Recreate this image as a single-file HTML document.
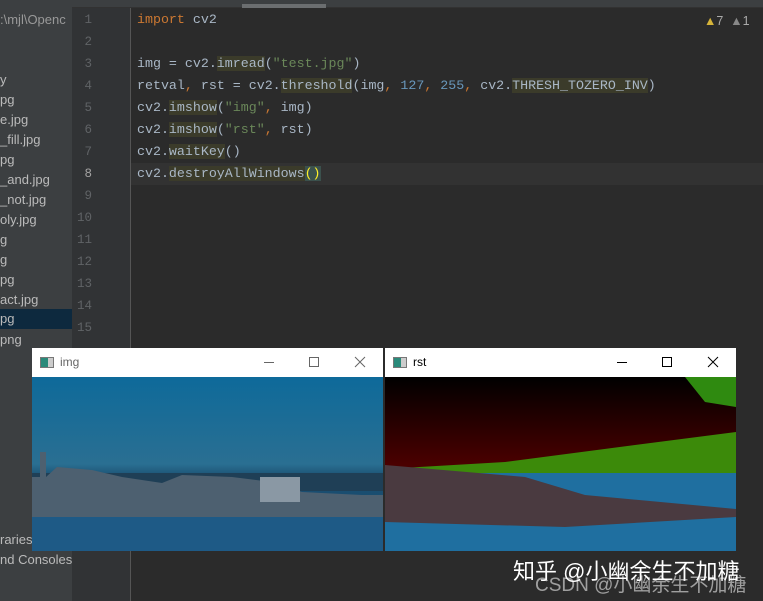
<!DOCTYPE html>
<html><head><meta charset="utf-8"><style>
*{margin:0;padding:0;box-sizing:border-box}
body{width:763px;height:601px;overflow:hidden;background:#2b2b2b;position:relative;font-family:"Liberation Sans","Noto Sans CJK SC",sans-serif}
.abs{position:absolute}
#side{left:0;top:0;width:72px;height:601px;background:#3c3f41;color:#bbbbbb;font-size:13px}
#side div{position:absolute;left:0;white-space:nowrap;height:20px;line-height:20px}
#gut{left:72px;top:8px;width:59px;height:593px;background:#313335;border-right:1px solid #555}
.ln{position:absolute;left:72px;width:20px;text-align:right;color:#606366;font:12.5px "Liberation Mono",monospace}
.code{position:absolute;left:137px;font:13.3px "Liberation Mono",monospace;color:#a9b7c6;white-space:pre;height:22px;line-height:22px}
.k{color:#cc7832}.s{color:#6a8759}.n{color:#6897bb}.h{background:#3b3b2a}.y{color:#ffef28;background:#3b514d}
#tabs{left:72px;top:0;width:691px;height:8px;background:#3c3f41;border-bottom:1px solid #323232}
.win{position:absolute;top:348px;width:351px;height:203px;background:#fff}
.tb{height:29px;font-size:12px;color:#000;position:relative}
.ic{position:absolute;left:8px;top:9px;width:14px;height:11px;border:1px solid #777;background:linear-gradient(90deg,#2a8a7a 60%,#ccc 60%)}
.t{position:absolute;left:28px;top:7px}
.ctl{position:absolute;top:8px}
</style></head><body>
<div id="side" class="abs">
<div style="top:10px;color:#999">:\mjl\Openc</div>
<div style="top:70px">y</div>
<div style="top:90px">pg</div>
<div style="top:110px">e.jpg</div>
<div style="top:130px">_fill.jpg</div>
<div style="top:150px">pg</div>
<div style="top:170px">_and.jpg</div>
<div style="top:190px">_not.jpg</div>
<div style="top:210px">oly.jpg</div>
<div style="top:230px">g</div>
<div style="top:250px">g</div>
<div style="top:270px">pg</div>
<div style="top:290px">act.jpg</div>
<div style="top:309px;width:72px;background:#0d293e">pg</div>
<div style="top:330px">png</div>
<div style="top:530px">raries</div>
<div style="top:550px">nd Consoles</div>
</div>
<div id="tabs" class="abs"><div class="abs" style="left:170px;top:4px;width:84px;height:4px;background:#6b6e70"></div></div>
<div id="gut" class="abs"></div>
<div class="abs" style="left:131px;top:163px;width:632px;height:22px;background:#323232"></div>
<div class="ln" style="top:13px">1</div><div class="ln" style="top:35px">2</div><div class="ln" style="top:57px">3</div><div class="ln" style="top:79px">4</div><div class="ln" style="top:101px">5</div><div class="ln" style="top:123px">6</div><div class="ln" style="top:145px">7</div><div class="ln" style="top:167px;color:#a4a3a3">8</div><div class="ln" style="top:189px">9</div><div class="ln" style="top:211px">10</div><div class="ln" style="top:233px">11</div><div class="ln" style="top:255px">12</div><div class="ln" style="top:277px">13</div><div class="ln" style="top:299px">14</div><div class="ln" style="top:321px">15</div>
<div class="code" style="top:9px"><span class="k">import</span> cv2</div>
<div class="code" style="top:53px">img = cv2.<span class="h">imread</span>(<span class="s">"test.jpg"</span>)</div>
<div class="code" style="top:75px">retval<span class="k">,</span> rst = cv2.<span class="h">threshold</span>(img<span class="k">,</span> <span class="n">127</span><span class="k">,</span> <span class="n">255</span><span class="k">,</span> cv2.<span class="h">THRESH_TOZERO_INV</span>)</div>
<div class="code" style="top:97px">cv2.<span class="h">imshow</span>(<span class="s">"img"</span><span class="k">,</span> img)</div>
<div class="code" style="top:119px">cv2.<span class="h">imshow</span>(<span class="s">"rst"</span><span class="k">,</span> rst)</div>
<div class="code" style="top:141px">cv2.<span class="h">waitKey</span>()</div>
<div class="code" style="top:163px">cv2.<span class="h">destroyAllWindows</span><span class="y">()</span></div>
<div class="abs" style="left:704px;top:14px;font-size:12.5px;color:#aaa"><span style="color:#d6b43a">▲</span>7 &nbsp;<span style="color:#888">▲</span>1</div>

<div class="win" style="left:32px">
<div class="tb"><div class="ic"></div><span class="t" style="color:#666">img</span>
<svg class="ctl" style="left:231px" width="12" height="12"><path d="M1 6.5H11" stroke="#666" stroke-width="1"/></svg>
<svg class="ctl" style="left:276px" width="12" height="12"><rect x="1.5" y="1.5" width="9" height="9" fill="none" stroke="#666"/></svg>
<svg class="ctl" style="left:322px" width="12" height="12"><path d="M1 1L11 11M11 1L1 11" stroke="#666"/></svg></div>
<svg width="351" height="174" style="display:block">
<defs><linearGradient id="sky" x1="0" y1="0" x2="0" y2="1"><stop offset="0" stop-color="#0e6a9a"/><stop offset="0.5" stop-color="#2a6f92"/><stop offset="0.58" stop-color="#1a4d6e"/><stop offset="1" stop-color="#1b4f78"/></linearGradient></defs>
<rect width="351" height="174" fill="url(#sky)"/>
<rect x="0" y="96" width="351" height="18" fill="#1f3f56"/>
<path d="M0 130 L0 100 L8 100 L8 75 L14 75 L14 100 L25 90 L60 93 L90 100 L130 106 L150 98 L200 100 L240 105 L270 115 L330 118 L351 118 L351 140 L0 140Z" fill="#4d6070"/>
<rect x="0" y="140" width="351" height="34" fill="#1e5a86"/>
<rect x="228" y="100" width="40" height="25" fill="#8a98a4"/>
</svg></div>

<div class="win" style="left:385px">
<div class="tb"><div class="ic"></div><span class="t">rst</span>
<svg class="ctl" style="left:231px" width="12" height="12"><path d="M1 6.5H11" stroke="#000"/></svg>
<svg class="ctl" style="left:276px" width="12" height="12"><rect x="1.5" y="1.5" width="9" height="9" fill="none" stroke="#000"/></svg>
<svg class="ctl" style="left:322px" width="12" height="12"><path d="M1 1L11 11M11 1L1 11" stroke="#000"/></svg></div>
<svg width="351" height="174" style="display:block">
<defs><linearGradient id="rs" x1="0" y1="0" x2="0" y2="1"><stop offset="0" stop-color="#000"/><stop offset="0.5" stop-color="#4a0000"/></linearGradient></defs>
<rect width="351" height="174" fill="url(#rs)"/>
<path d="M0 92 L120 85 L250 68 L351 55 L351 98 L0 98Z" fill="#3c8a0a"/>
<path d="M300 0 L351 0 L351 30 L320 25Z" fill="#2f8a10"/>
<rect x="0" y="96" width="351" height="78" fill="#1f6fa0"/>
<path d="M0 88 L0 145 L180 150 L351 140 L351 132 L200 118 L140 100 Z" fill="#4a3a40"/>
</svg></div>

<div class="abs" style="left:513px;top:554px;font-size:22px;color:#fff;white-space:nowrap">知乎 @小幽余生不加糖</div>
<div class="abs" style="left:535px;top:570px;font-size:19px;color:rgba(255,255,255,0.55);white-space:nowrap">CSDN @小幽余生不加糖</div>
</body></html>
